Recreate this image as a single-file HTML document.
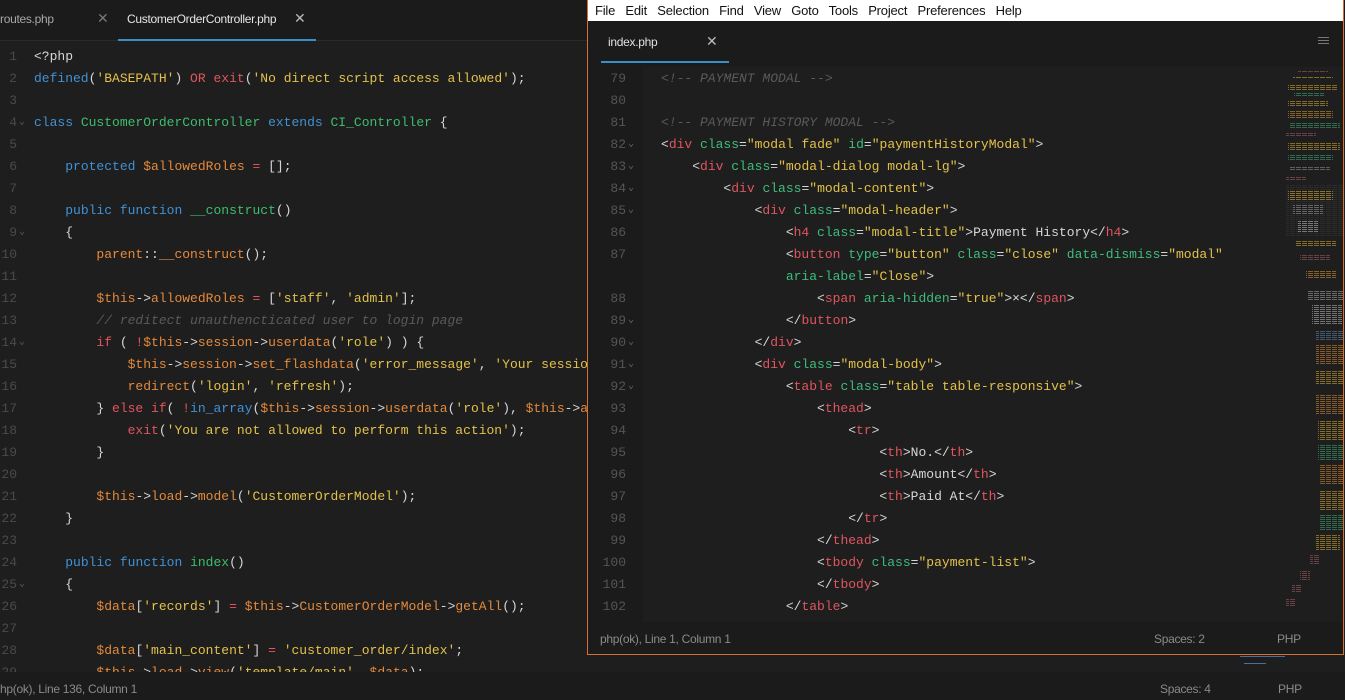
<!DOCTYPE html>
<html><head><meta charset="utf-8"><style>
*{margin:0;padding:0;box-sizing:border-box}
body{width:1345px;height:700px;background:#1e1e1e;position:relative;overflow:hidden;font-family:"Liberation Sans",sans-serif}
.code{position:absolute;font-family:"Liberation Mono",monospace;font-size:13px;line-height:22px;white-space:pre;color:#d6d6d6}
.ln{position:absolute;font-family:"Liberation Mono",monospace;font-size:13px;line-height:22px;white-space:pre;color:#4a4a4a;text-align:right}
.t{color:#e0555f}.a{color:#3dbd7d}.s{color:#e3c14a}.c{color:#5a5a5a;font-style:italic}.k{color:#3f92d6}.r{color:#e3545d}.v{color:#e48a3c}.g{color:#3dbd6e}
.tab{position:absolute;font-size:12px;letter-spacing:-0.3px;color:#d0d0d0}
.st{position:absolute;font-size:12px;letter-spacing:-0.3px;color:#8a8a8a}
</style></head><body>
<div style="position:absolute;left:0;top:0;width:1345px;height:41px;background:#1b1b1b"></div>
<div style="position:absolute;left:0;top:40px;width:600px;height:1px;background:#2a2a2a"></div>
<div class="tab" style="left:0;top:12px;color:#a8a8a8">routes.php</div>
<div class="tab" style="left:97px;top:10px;color:#777;font-size:14px">✕</div>
<div class="tab" style="left:127px;top:12px;color:#e6e6e6">CustomerOrderController.php</div>
<div class="tab" style="left:294px;top:10px;color:#bbb;font-size:14px">✕</div>
<div style="position:absolute;left:118px;top:39px;width:198px;height:2px;background:#3a8fc7"></div>
<div class="ln" style="left:0;top:46px;width:17px">1
2
3
4
5
6
7
8
9
10
11
12
13
14
15
16
17
18
19
20
21
22
23
24
25
26
27
28
29</div>
<div class="ln" style="left:19px;top:46px;color:#5a5a5a;font-size:10px">


⌄




⌄




⌄










⌄</div>
<div class="code" style="left:34px;top:46px">&lt;?php
<span class="k">defined</span>(<span class="s">'BASEPATH'</span>) <span class="r">OR</span> <span class="r">exit</span>(<span class="s">'No direct script access allowed'</span>);

<span class="k">class</span> <span class="g">CustomerOrderController</span> <span class="k">extends</span> <span class="g">CI_Controller</span> {

    <span class="k">protected</span> <span class="v">$allowedRoles</span> <span class="r">=</span> [];

    <span class="k">public</span> <span class="k">function</span> <span class="g">__construct</span>()
    {
        <span class="v">parent</span>::<span class="v">__construct</span>();

        <span class="v">$this</span>-&gt;<span class="v">allowedRoles</span> <span class="r">=</span> [<span class="s">'staff'</span>, <span class="s">'admin'</span>];
        <span class="c">// reditect unauthencticated user to login page</span>
        <span class="r">if</span> ( <span class="r">!</span><span class="v">$this</span>-&gt;<span class="v">session</span>-&gt;<span class="v">userdata</span>(<span class="s">'role'</span>) ) {
            <span class="v">$this</span>-&gt;<span class="v">session</span>-&gt;<span class="v">set_flashdata</span>(<span class="s">'error_message'</span>, <span class="s">'Your session has expired'</span>);
            <span class="v">redirect</span>(<span class="s">'login'</span>, <span class="s">'refresh'</span>);
        } <span class="r">else</span> <span class="r">if</span>( <span class="r">!</span><span class="k">in_array</span>(<span class="v">$this</span>-&gt;<span class="v">session</span>-&gt;<span class="v">userdata</span>(<span class="s">'role'</span>), <span class="v">$this</span>-&gt;<span class="v">allowedRoles</span>) ) {
            <span class="r">exit</span>(<span class="s">'You are not allowed to perform this action'</span>);
        }

        <span class="v">$this</span>-&gt;<span class="v">load</span>-&gt;<span class="v">model</span>(<span class="s">'CustomerOrderModel'</span>);
    }

    <span class="k">public</span> <span class="k">function</span> <span class="g">index</span>()
    {
        <span class="v">$data</span>[<span class="s">'records'</span>] <span class="r">=</span> <span class="v">$this</span>-&gt;<span class="v">CustomerOrderModel</span>-&gt;<span class="v">getAll</span>();

        <span class="v">$data</span>[<span class="s">'main_content'</span>] <span class="r">=</span> <span class="s">'customer_order/index'</span>;
        <span class="v">$this</span>-&gt;<span class="v">load</span>-&gt;<span class="v">view</span>(<span class="s">'template/main'</span>, <span class="v">$data</span>);</div>
<div style="position:absolute;left:0;top:672px;width:1345px;height:28px;background:#1b1b1b"></div>
<div class="st" style="left:0;top:682px">hp(ok), Line 136, Column 1</div>
<div class="st" style="left:1160px;top:682px">Spaces: 4</div>
<div class="st" style="left:1278px;top:682px">PHP</div>
<div style="position:absolute;left:1240px;top:656px;width:45px;height:1px;background:#4a6f9a"></div>
<div style="position:absolute;left:1244px;top:663px;width:22px;height:1px;background:#4a6f9a"></div>

<div style="position:absolute;left:587px;top:0;width:757px;height:655px;border:1px solid #d2732f;border-top:none;background:#1e1e1e;overflow:hidden">
  <div style="position:absolute;left:0;top:0;width:757px;height:21px;background:#fff;font-size:13px;letter-spacing:-0.2px;color:#111;line-height:21px;white-space:pre;padding-left:7px">File   Edit   Selection   Find   View   Goto   Tools   Project   Preferences   Help</div>
  <div style="position:absolute;left:0;top:21px;width:757px;height:46px;background:#1b1b1b"></div>
  <div class="tab" style="left:20px;top:35px;color:#e0e0e0">index.php</div>
  <div class="tab" style="left:118px;top:33px;color:#bbb;font-size:14px">✕</div>
  <div style="position:absolute;left:13px;top:61px;width:128px;height:2px;background:#3a8fc7"></div>
  <div style="position:absolute;left:730px;top:37px;width:11px;height:1px;background:#777;box-shadow:0 3px 0 #777,0 6px 0 #777"></div>
  <div style="position:absolute;left:0;top:67px;width:55px;height:555px;background:#1b1b1b"></div>
  <div class="ln" style="left:0;top:68px;width:38px;color:#555">79
80
81
82
83
84
85
86
87

88
89
90
91
92
93
94
95
96
97
98
99
100
101
102</div>
  <div class="ln" style="left:40px;top:68px;color:#666;font-size:10px">


⌄
⌄
⌄
⌄




⌄
⌄
⌄
⌄</div>
  <div class="code" style="left:73px;top:68px"><span class="c">&lt;!-- PAYMENT MODAL --&gt;</span>

<span class="c">&lt;!-- PAYMENT HISTORY MODAL --&gt;</span>
&lt;<span class="t">div</span> <span class="a">class</span>=<span class="s">"modal fade"</span> <span class="a">id</span>=<span class="s">"paymentHistoryModal"</span>&gt;
    &lt;<span class="t">div</span> <span class="a">class</span>=<span class="s">"modal-dialog modal-lg"</span>&gt;
        &lt;<span class="t">div</span> <span class="a">class</span>=<span class="s">"modal-content"</span>&gt;
            &lt;<span class="t">div</span> <span class="a">class</span>=<span class="s">"modal-header"</span>&gt;
                &lt;<span class="t">h4</span> <span class="a">class</span>=<span class="s">"modal-title"</span>&gt;Payment History&lt;/<span class="t">h4</span>&gt;
                &lt;<span class="t">button</span> <span class="a">type</span>=<span class="s">"button"</span> <span class="a">class</span>=<span class="s">"close"</span> <span class="a">data-dismiss</span>=<span class="s">"modal"</span>
                <span class="a">aria-label</span>=<span class="s">"Close"</span>&gt;
                    &lt;<span class="t">span</span> <span class="a">aria-hidden</span>=<span class="s">"true"</span>&gt;×&lt;/<span class="t">span</span>&gt;
                &lt;/<span class="t">button</span>&gt;
            &lt;/<span class="t">div</span>&gt;
            &lt;<span class="t">div</span> <span class="a">class</span>=<span class="s">"modal-body"</span>&gt;
                &lt;<span class="t">table</span> <span class="a">class</span>=<span class="s">"table table-responsive"</span>&gt;
                    &lt;<span class="t">thead</span>&gt;
                        &lt;<span class="t">tr</span>&gt;
                            &lt;<span class="t">th</span>&gt;No.&lt;/<span class="t">th</span>&gt;
                            &lt;<span class="t">th</span>&gt;Amount&lt;/<span class="t">th</span>&gt;
                            &lt;<span class="t">th</span>&gt;Paid At&lt;/<span class="t">th</span>&gt;
                        &lt;/<span class="t">tr</span>&gt;
                    &lt;/<span class="t">thead</span>&gt;
                    &lt;<span class="t">tbody</span> <span class="a">class</span>=<span class="s">"payment-list"</span>&gt;
                    &lt;/<span class="t">tbody</span>&gt;
                &lt;/<span class="t">table</span>&gt;</div>
  <svg style="position:absolute;left:0;top:0" width="757" height="655">
    <defs><pattern id="st" width="6" height="2" patternUnits="userSpaceOnUse"><rect width="6" height="1" fill="#1e1e1e"/><rect x="5" y="1" width="1" height="1" fill="#1e1e1e"/></pattern></defs>
    <rect x="698" y="185" width="58" height="52" fill="#2b2b2b"/>
    <g opacity="0.6">
      <rect x="710" y="70" width="30" height="2" fill="#9a5a5a"/><rect x="705" y="76" width="40" height="3" fill="#c9a030"/>
      <rect x="700" y="84" width="50" height="6" fill="#c9a030"/><rect x="706" y="92" width="30" height="4" fill="#3f9f6f"/>
      <rect x="700" y="100" width="40" height="6" fill="#c9a030"/><rect x="700" y="110" width="45" height="8" fill="#c99030"/>
      <rect x="702" y="122" width="50" height="6" fill="#3f9f6f"/><rect x="698" y="132" width="30" height="4" fill="#9a5a5a"/>
      <rect x="700" y="142" width="52" height="8" fill="#c9a030"/><rect x="700" y="155" width="45" height="6" fill="#3f9f6f"/>
      <rect x="702" y="166" width="40" height="4" fill="#8a8a8a"/><rect x="698" y="176" width="20" height="4" fill="#9a5a5a"/>
      <rect x="700" y="190" width="45" height="10" fill="#c9a030"/><rect x="705" y="205" width="30" height="10" fill="#8a8a8a"/>
      <rect x="710" y="220" width="20" height="12" fill="#aaa"/><rect x="708" y="240" width="40" height="6" fill="#c9a030"/>
      <rect x="712" y="255" width="30" height="6" fill="#9a5a5a"/><rect x="718" y="270" width="30" height="8" fill="#c99030"/>
      <rect x="720" y="290" width="36" height="10" fill="#9a9a9a"/><rect x="724" y="305" width="30" height="20" fill="#aaa"/>
      <rect x="728" y="330" width="28" height="10" fill="#5a7fa0"/><rect x="728" y="345" width="28" height="20" fill="#c98030"/>
      <rect x="728" y="370" width="28" height="15" fill="#c9a030"/><rect x="728" y="395" width="28" height="20" fill="#c98030"/>
      <rect x="730" y="420" width="26" height="20" fill="#c9a030"/><rect x="730" y="445" width="26" height="15" fill="#3f9f6f"/>
      <rect x="732" y="465" width="24" height="20" fill="#c98030"/><rect x="732" y="490" width="24" height="20" fill="#c9a030"/>
      <rect x="732" y="515" width="24" height="15" fill="#3f9f6f"/><rect x="728" y="535" width="24" height="15" fill="#c9a030"/>
      <rect x="722" y="555" width="10" height="10" fill="#9a5a5a"/><rect x="712" y="570" width="10" height="10" fill="#9a5a5a"/>
      <rect x="704" y="585" width="10" height="8" fill="#9a5a5a"/><rect x="698" y="598" width="10" height="8" fill="#9a5a5a"/>
    </g>
    <rect x="696" y="68" width="60" height="554" fill="url(#st)"/>
  </svg>
  <div style="position:absolute;left:0;top:622px;width:757px;height:33px;background:#1b1b1b"></div>
  <div class="st" style="left:12px;top:632px">php(ok), Line 1, Column 1</div>
  <div class="st" style="left:566px;top:632px">Spaces: 2</div>
  <div class="st" style="left:689px;top:632px">PHP</div>
</div>
</body></html>
